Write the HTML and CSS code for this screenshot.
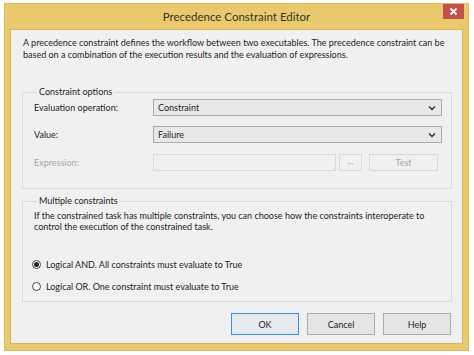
FILE: index.html
```html
<!DOCTYPE html>
<html lang="en">
<head>
    <meta charset="UTF-8">
    <title>Precedence Constraint Editor</title>
    <link rel="stylesheet" href="styles.css">
</head>
<body>
    <div class="window">
        <div class="title-bar">
            <span class="title">Precedence Constraint Editor</span>
            <div class="close-btn">
                <svg width="9" height="9" viewBox="0 0 9 9"><path d="M1.5 1.5 L7.5 7.5 M7.5 1.5 L1.5 7.5" stroke="#fff" stroke-width="1.8"/></svg>
            </div>
        </div>
        <div class="content">
            <p class="intro">A precedence constraint defines the workflow between two executables. The precedence constraint can be<br>based on a combination of the execution results and the evaluation of expressions.</p>

            <fieldset class="group">
                <legend>Constraint options</legend>
                <div class="form-grid">
                    <label>Evaluation operation:</label>
                    <div class="combo">
                        <span>Constraint</span>
                        <svg width="8" height="6" viewBox="0 0 8 6"><path d="M1 1.5 L4 4.5 L7 1.5" fill="none" stroke="#333" stroke-width="1.5"/></svg>
                    </div>
                    <label>Value:</label>
                    <div class="combo">
                        <span>Failure</span>
                        <svg width="8" height="6" viewBox="0 0 8 6"><path d="M1 1.5 L4 4.5 L7 1.5" fill="none" stroke="#333" stroke-width="1.5"/></svg>
                    </div>
                    <label class="disabled">Expression:</label>
                    <div class="expr-row">
                        <div class="textbox"></div>
                        <div class="btn small-btn disabled">&middot;&middot;&middot;</div>
                        <div class="btn test-btn disabled">Test</div>
                    </div>
                </div>
            </fieldset>

            <fieldset class="group group-multi">
                <legend>Multiple constraints</legend>
                <p class="multi-text">If the constrained task has multiple constraints, you can choose how the constraints interoperate to<br>control the execution of the constrained task.</p>
                <div class="radio-list">
                    <label class="radio-row"><span class="radio checked"></span>Logical AND. All constraints must evaluate to True</label>
                    <label class="radio-row"><span class="radio"></span>Logical OR. One constraint must evaluate to True</label>
                </div>
            </fieldset>

            <div class="button-row">
                <div class="btn dlg-btn default">OK</div>
                <div class="btn dlg-btn">Cancel</div>
                <div class="btn dlg-btn">Help</div>
            </div>
        </div>
    </div>
</body>
</html>
```

FILE: styles.css
```css
body {
    margin: 0;
    background: #fff;
    font-family: Lato, "Noto Sans", sans-serif;
    font-size: 9px;
    color: #1e1e1e;
}
.window {
    margin: 3px 0 0 4px;
    width: 463px;
    height: 346px;
    background: #eac96d;
    border: 1px solid #dcbb5f;
    display: flex;
    flex-direction: column;
}
.title-bar {
    position: relative;
    height: 25px;
    display: flex;
    align-items: center;
    justify-content: center;
}
.title {
    font-size: 11.5px;
    color: #333;
}
.close-btn {
    position: absolute;
    top: 0;
    right: 4px;
    width: 21px;
    height: 15px;
    background: #c4504b;
    display: flex;
    align-items: center;
    justify-content: center;
}
.content {
    margin: 0 5px 6px 5px;
    flex: 1;
    background: #f0f0f0;
    border: 1px solid #d6b65c;
    display: flex;
    flex-direction: column;
}
.intro {
    margin: 7px 0 0 12px;
    line-height: 12px;
    white-space: nowrap;
}
.group {
    margin: 0 10px 0 11px;
    padding: 0 9px 0 11px;
    border: 1px solid #d9d9d9;
}
.group legend {
    padding: 0 2px;
    margin-left: 3px;
    line-height: 12px;
}
.group:first-of-type {
    margin-top: 25px;
    padding-top: 1px;
    padding-bottom: 17px;
}
.form-grid {
    display: grid;
    grid-template-columns: 119px 1fr;
    row-gap: 10px;
    align-items: center;
}
.combo {
    height: 15px;
    border: 1px solid #acacac;
    background: #e8e8e8;
    display: flex;
    align-items: center;
    justify-content: space-between;
    padding: 0 5px 0 4px;
}
.disabled {
    color: #a6a6a6;
}
.expr-row {
    display: flex;
    align-items: center;
    margin-right: 4px;
    margin-top: 1px;
}
.textbox {
    flex: 1;
    height: 15px;
    border: 1px solid #dadada;
    background: #f0f0f0;
}
.btn {
    display: flex;
    align-items: center;
    justify-content: center;
    border: 1px solid #acacac;
    background: #e5e5e5;
    box-sizing: border-box;
}
.btn.disabled {
    border-color: #d9d9d9;
    background: #f0f0f0;
}
.small-btn {
    width: 23px;
    height: 17px;
    margin-left: 3px;
    font-size: 8px;
}
.test-btn {
    width: 69px;
    height: 17px;
    margin-left: 7px;
}
.group-multi {
    margin-top: 6px;
    padding-top: 3px;
    padding-bottom: 8px;
}
.multi-text {
    margin: 0;
    line-height: 11px;
    white-space: nowrap;
}
.radio-list {
    margin-top: 25px;
    display: flex;
    flex-direction: column;
    gap: 8px;
}
.radio-row {
    display: flex;
    align-items: center;
    height: 14px;
    margin-left: -2px;
}
.radio {
    width: 9px;
    height: 9px;
    border: 1px solid #444;
    border-radius: 50%;
    background: #fff;
    box-sizing: border-box;
    margin-right: 5px;
    display: flex;
    align-items: center;
    justify-content: center;
}
.radio.checked::after {
    content: "";
    width: 5px;
    height: 5px;
    border-radius: 50%;
    background: #222;
}
.button-row {
    display: flex;
    justify-content: flex-end;
    gap: 8px;
    margin-top: 11px;
    padding-right: 11px;
}
.dlg-btn {
    width: 68px;
    height: 22px;
}
.dlg-btn.default {
    border-color: #3c8fdc;
    background: #e5eaf0;
}
```
